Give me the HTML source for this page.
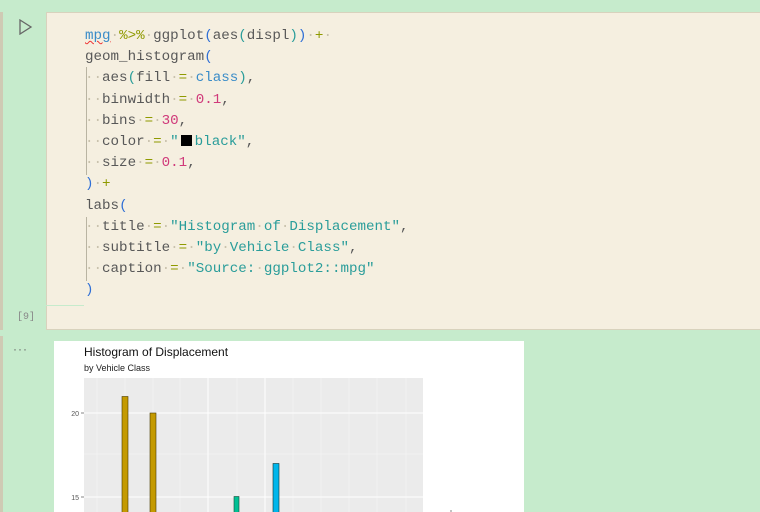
<!DOCTYPE html>
<html><head><style>
body{margin:0;width:760px;height:512px;background:#c6ebcc;overflow:hidden;position:relative;font-family:"Liberation Sans",sans-serif}
.lb{position:absolute;left:0;width:3px;background:#cfcab4}
.cell{position:absolute;left:46px;top:12px;width:714px;height:318px;background:#f5efe0;border:1px solid #d8d2bd;border-right:none;box-sizing:border-box}
.code{position:absolute;left:85px;top:26px;font-family:"Liberation Mono",monospace;font-size:14.2px;line-height:21.2px;color:#585858;white-space:pre}
.d{color:#c9c2ad}.b{color:#2f6fd6}.o{color:#8f9a00}.n{color:#d03a7a}.s{color:#2a9d9a}.v{color:#3a8cc8}
.guide{position:absolute;left:86px;width:1px;background:#b9b4a2}
</style></head><body>
<div class="lb" style="top:12px;height:318px"></div>
<div class="lb" style="top:336px;height:176px"></div>
<svg style="position:absolute;left:18px;top:19px" width="16" height="16"><path d="M2 1 L13 8 L2 15 Z" fill="none" stroke="#666" stroke-width="1.3"/></svg>
<div style="position:absolute;left:17px;top:312px;font-family:'Liberation Mono',monospace;font-size:10px;color:#888">[9]</div>
<div style="position:absolute;left:13px;top:342px;font-size:12px;color:#666;letter-spacing:1px">···</div>
<div class="cell"></div>
<div style="position:absolute;left:46px;top:305px;width:38px;height:1px;background:#c6ebcc"></div>
<div class="guide" style="top:67px;height:108px"></div>
<div class="guide" style="top:217px;height:64px"></div>
<div class="code"><span class="v" style="text-decoration:underline wavy #e33;text-decoration-thickness:1px">mpg</span><span class="d">·</span><span class="o">%&gt;%</span><span class="d">·</span>ggplot<span class="b">(</span>aes<span class="s">(</span>displ<span class="s">)</span><span class="b">)</span><span class="d">·</span><span class="o">+</span><span class="d">·</span>
geom_histogram<span class="b">(</span>
<span class="d">··</span>aes<span class="s">(</span>fill<span class="d">·</span><span class="o">=</span><span class="d">·</span><span class="v">class</span><span class="s">)</span>,
<span class="d">··</span>binwidth<span class="d">·</span><span class="o">=</span><span class="d">·</span><span class="n">0.1</span>,
<span class="d">··</span>bins<span class="d">·</span><span class="o">=</span><span class="d">·</span><span class="n">30</span>,
<span class="d">··</span>color<span class="d">·</span><span class="o">=</span><span class="d">·</span><span class="s">"<span style="display:inline-block;width:11px;height:11px;background:#000;vertical-align:-1px;margin:0 3px 0 2px"></span>black"</span>,
<span class="d">··</span>size<span class="d">·</span><span class="o">=</span><span class="d">·</span><span class="n">0.1</span>,
<span class="b">)</span><span class="d">·</span><span class="o">+</span>
labs<span class="b">(</span>
<span class="d">··</span>title<span class="d">·</span><span class="o">=</span><span class="d">·</span><span class="s">"Histogram<span class="d">·</span>of<span class="d">·</span>Displacement"</span>,
<span class="d">··</span>subtitle<span class="d">·</span><span class="o">=</span><span class="d">·</span><span class="s">"by<span class="d">·</span>Vehicle<span class="d">·</span>Class"</span>,
<span class="d">··</span>caption<span class="d">·</span><span class="o">=</span><span class="d">·</span><span class="s">"Source:<span class="d">·</span>ggplot2::mpg"</span>
<span class="b">)</span></div>
<div style="position:absolute;left:54px;top:341px;width:470px;height:171px;background:#fff"></div>
<div style="position:absolute;left:84px;top:345px;font-size:12px;color:#111">Histogram of Displacement</div>
<div style="position:absolute;left:84px;top:363px;font-size:9px;color:#222">by Vehicle Class</div>
<svg style="position:absolute;left:0;top:0" width="760" height="512">
<rect x="84" y="378" width="339" height="140" fill="#ebebeb"/>
<g stroke="#f5f5f5" stroke-width="0.6">
<line x1="97" y1="378" x2="97" y2="512"/><line x1="125" y1="378" x2="125" y2="512"/><line x1="153" y1="378" x2="153" y2="512"/><line x1="180" y1="378" x2="180" y2="512"/><line x1="237" y1="378" x2="237" y2="512"/><line x1="293" y1="378" x2="293" y2="512"/><line x1="321" y1="378" x2="321" y2="512"/><line x1="349" y1="378" x2="349" y2="512"/><line x1="377" y1="378" x2="377" y2="512"/><line x1="406" y1="378" x2="406" y2="512"/><line x1="84" y1="454" x2="423" y2="454"/>
</g>
<g stroke="#fff" stroke-width="1"><line x1="208" y1="378" x2="208" y2="512"/><line x1="265" y1="378" x2="265" y2="512"/><line x1="84" y1="413" x2="423" y2="413"/><line x1="84" y1="497" x2="423" y2="497"/></g>
<g stroke="#333" stroke-width="0.6"><line x1="81" y1="413" x2="84" y2="413"/><line x1="81" y1="497" x2="84" y2="497"/><line x1="451" y1="510" x2="451" y2="512"/></g>
<text x="79" y="416" font-size="7" fill="#555" text-anchor="end" font-family="Liberation Sans">20</text>
<text x="79" y="500" font-size="7" fill="#555" text-anchor="end" font-family="Liberation Sans">15</text>
<g stroke="#4a3a00" stroke-width="0.6">
<rect x="122" y="396.5" width="6" height="120" fill="#c49a00"/>
<rect x="150" y="413" width="6" height="110" fill="#c49a00"/>
<rect x="234" y="496.5" width="5" height="30" fill="#00c094" stroke="#1a4a3a"/>
<rect x="273" y="463.5" width="6" height="60" fill="#00b6eb" stroke="#133"/>
</g>
</svg>
</body></html>
